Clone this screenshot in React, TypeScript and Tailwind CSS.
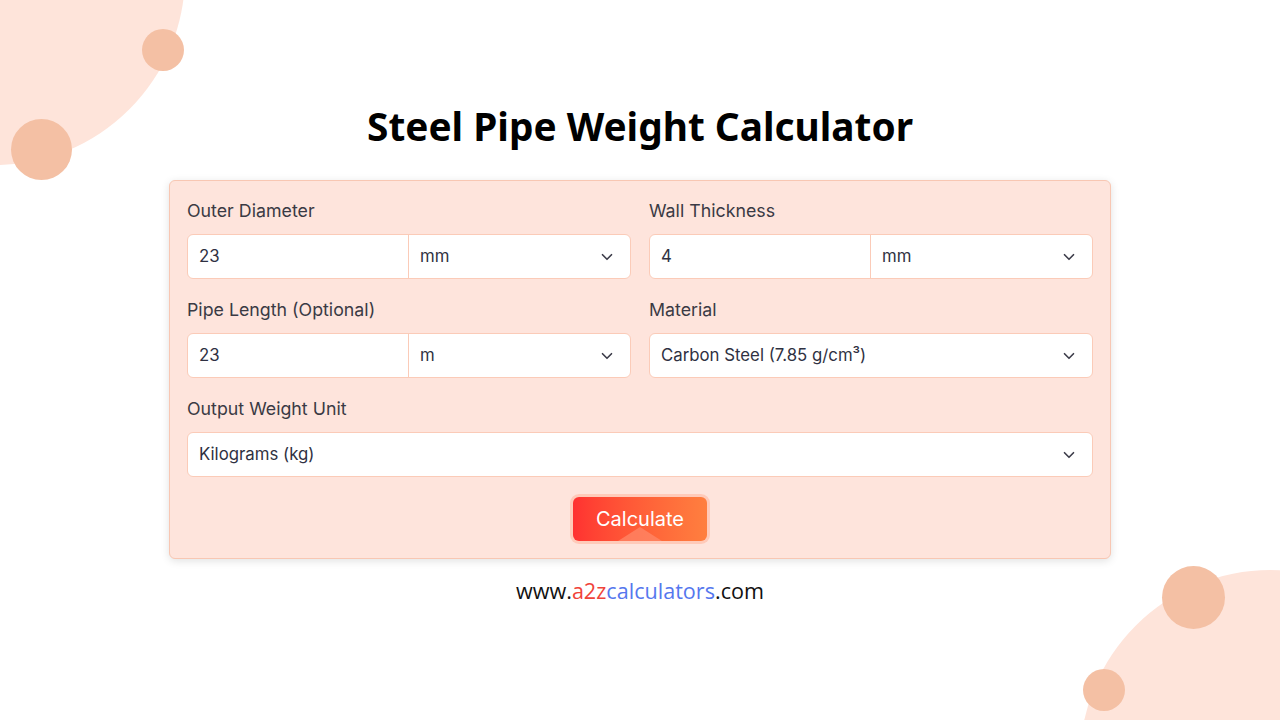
import { ChevronDown } from 'lucide-react';

interface SelectBoxProps {
  value: string;
  className?: string;
}

function SelectBox({ value, className = '' }: SelectBoxProps) {
  return (
    <div className={`flex items-center justify-between h-full pl-[11px] pr-3 text-[16.8px] text-[#2f3142] ${className}`}>
      <span>{value}</span>
      <ChevronDown className="w-[18px] h-[18px] text-[#3d3d4a] mr-[2px]" strokeWidth={2.2} />
    </div>
  );
}

interface UnitFieldProps {
  label: string;
  value: string;
  unit: string;
}

function UnitField({ label, value, unit }: UnitFieldProps) {
  return (
    <div className="flex flex-col">
      <label className="text-[17.8px] leading-[24px] text-[#3a3a44] mb-[11px]">{label}</label>
      <div className="flex h-[45px] bg-white border border-[#fbcbb8] rounded-[6px] overflow-hidden">
        <div className="flex items-center w-1/2 pl-[11px] text-[16.8px] text-[#2f3142] border-r border-[#fbcbb8]">{value}</div>
        <SelectBox value={unit} className="w-1/2" />
      </div>
    </div>
  );
}

function SelectField({ label, value }: { label: string; value: string }) {
  return (
    <div className="flex flex-col">
      <label className="text-[17.8px] leading-[24px] text-[#3a3a44] mb-[11px]">{label}</label>
      <div className="h-[45px] bg-white border border-[#fbcbb8] rounded-[6px]">
        <SelectBox value={value} />
      </div>
    </div>
  );
}

export default function App() {
  return (
    <div className="relative w-[1280px] h-[720px] overflow-hidden bg-white" style={{ fontFamily: 'Inter, "Noto Sans", sans-serif' }}>
      {/* decorative circles */}
      <div className="absolute left-[-195px] top-[-215px] w-[380px] h-[380px] rounded-full bg-[#fee4da]" />
      <div className="absolute left-[142px] top-[29px] w-[42px] h-[42px] rounded-full bg-[#f4c0a4]" />
      <div className="absolute left-[11px] top-[119px] w-[61px] h-[61px] rounded-full bg-[#f4c0a4]" />
      <div className="absolute left-[1080px] top-[570px] w-[380px] h-[380px] rounded-full bg-[#fee4da]" />
      <div className="absolute left-[1162px] top-[566px] w-[63px] h-[63px] rounded-full bg-[#f4c0a4]" />
      <div className="absolute left-[1083px] top-[669px] w-[42px] h-[42px] rounded-full bg-[#f4c0a4]" />

      <div className="relative flex flex-col items-center pt-[100px]">
        <h1 className="text-[38.8px] leading-[52px] font-bold text-black" style={{ fontFamily: '"Noto Sans", sans-serif' }}>
          Steel Pipe Weight Calculator
        </h1>

        <div className="mt-[28px] w-[942px] bg-[#fee4dc] border border-[#f8c7b3] rounded-[6px] shadow-[0_2px_8px_rgba(0,0,0,0.12)] px-[17px] pt-[18px] pb-[14px]">
          <div className="grid grid-cols-2 gap-x-[18px] gap-y-[19px]">
            <UnitField label="Outer Diameter" value="23" unit="mm" />
            <UnitField label="Wall Thickness" value="4" unit="mm" />
            <UnitField label="Pipe Length (Optional)" value="23" unit="m" />
            <SelectField label="Material" value="Carbon Steel (7.85 g/cm³)" />
            <div className="col-span-2">
              <SelectField label="Output Weight Unit" value="Kilograms (kg)" />
            </div>
          </div>

          <div className="flex justify-center mt-[17px]">
            <div className="p-[3px] rounded-[9px] bg-[#ffcab9]">
              <button className="relative overflow-hidden w-[134px] h-[44px] rounded-[6px] bg-gradient-to-r from-[#ff3131] to-[#ff7f3f] text-white text-[20px]">
                <span className="absolute left-1/2 bottom-0 -translate-x-1/2 w-0 h-0 border-l-[22px] border-r-[22px] border-b-[14px] border-l-transparent border-r-transparent border-b-[#ff8a6b]/70" />
                <span className="relative">Calculate</span>
              </button>
            </div>
          </div>
        </div>

        <p className="mt-[16px] text-[21.6px] text-[#111]" style={{ fontFamily: '"Open Sans", sans-serif' }}>
          www.<span className="text-[#f0433a]">a2z</span><span className="text-[#5577ee]">calculators</span>.com
        </p>
      </div>
    </div>
  );
}
